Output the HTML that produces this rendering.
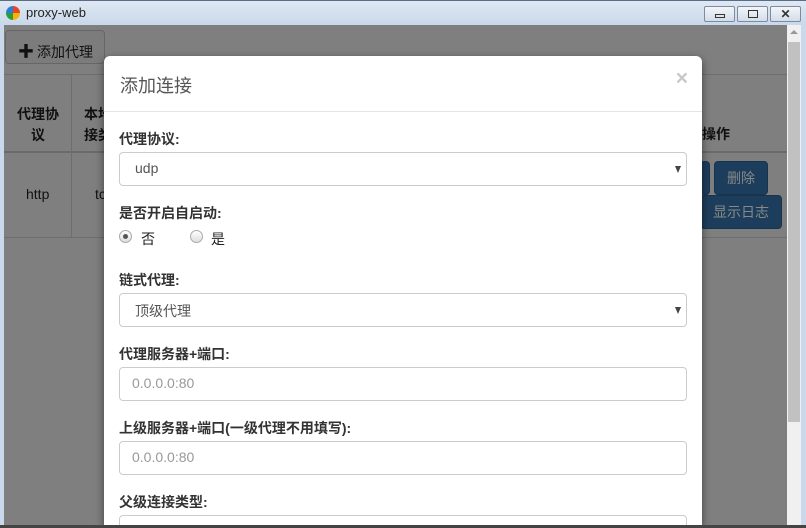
<!DOCTYPE html>
<html style="overflow:hidden;height:528px"><head><meta charset="utf-8"><style>
*{box-sizing:border-box}
html,body{overflow:hidden}
body{margin:0;width:806px;height:528px;font-family:"Liberation Sans","Noto Sans CJK SC",sans-serif;font-size:14px;color:#333;background:#7f7f7f;position:relative}
.tb{position:absolute;left:0;top:0;width:806px;height:25px;background:linear-gradient(#dfe8f3,#c9d8ea);border-top:1px solid #5a6d86}
.tb .t{position:absolute;left:26px;top:4px;font-size:13px;color:#222}
.ic{position:absolute;left:6px;top:5px;width:14px;height:14px;border-radius:50%;background:conic-gradient(#e8442b 0 25%,#f7b500 0 50%,#2c9b3c 0 75%,#2a7fd4 0)}
.wb{position:absolute;top:5px;height:16px;border:1px solid #7d8ba0;border-radius:2px;background:linear-gradient(#f2f5f9,#d4dde8)}
.a{position:absolute}
.frame{position:absolute;left:0;top:25px;width:4px;height:503px;background:#c9d8ea}
.frr{position:absolute;left:801px;top:25px;width:5px;height:503px;background:#c9d8ea}
.bot{position:absolute;left:0;top:525px;width:806px;height:3px;background:#444}
.sb{position:absolute;left:787px;top:25px;width:14px;height:500px;background:#f0f0f0}
.sb .th{position:absolute;left:1px;top:17px;width:12px;height:380px;background:#c1c1c1}
.modal{position:absolute;left:104px;top:56px;width:598px;height:469px;background:#fff;border-radius:6px 6px 0 0;box-shadow:0 3px 9px rgba(0,0,0,.5);overflow:hidden}
.mh{height:56px;border-bottom:1px solid #e5e5e5;position:relative}
.mh .ti{position:absolute;left:16px;top:16px;font-size:18px;color:#555}
.mh .x{position:absolute;right:14px;top:11px;font-size:21px;font-weight:bold;color:#c8c8c8}
.lb{position:absolute;left:15px;font-weight:bold;font-size:14px;color:#333}
.in{position:absolute;left:15px;width:568px;height:34px;border:1px solid #ccc;border-radius:4px;padding:7px 15px;color:#555;font-size:14px}
.ph{color:#999;padding-left:12px}
.arr{position:absolute;right:5px;top:13px;width:0;height:0;border-left:3px solid transparent;border-right:3px solid transparent;border-top:7px solid #444}
.rd{position:absolute;width:13px;height:13px;border-radius:50%;border:1px solid #aaa;background:linear-gradient(#fff,#ddd)}
.btn{position:absolute;background:#1c3e5c;border-radius:4px;color:#888;font-size:14px;text-align:center;border:1px solid #17344e}
</style></head><body>
<div class="tb"><div class="ic"></div><span class="t">proxy-web</span>
<div class="wb" style="left:704px;width:31px"><div class="a" style="left:10px;top:7px;width:10px;height:4px;border:1px solid #333"></div></div>
<div class="wb" style="left:737px;width:31px"><div class="a" style="left:10px;top:3px;width:10px;height:8px;border:1px solid #333"></div></div>
<div class="wb" style="left:770px;width:31px;text-align:center;font-size:12px;font-weight:bold;line-height:14px;color:#333">✕</div>
</div>
<div class="frame"></div><div class="frr"></div>
<div class="a" style="left:5px;top:30px;width:100px;height:34px;border:1px solid #666;border-radius:4px;background:#7c7c7c;padding:7px 0 0 12px;color:#111;white-space:nowrap"><b style="font-size:16px;margin-right:3px">✚</b>添加代理</div>
<div class="a" style="left:4px;top:74px;width:783px;height:1px;background:#6e6e6e"></div>
<div class="a" style="left:4px;top:151px;width:783px;height:2px;background:#6a6a6a"></div>
<div class="a" style="left:4px;top:237px;width:783px;height:1px;background:#6e6e6e"></div>
<div class="a" style="left:71px;top:74px;width:1px;height:163px;background:#6e6e6e"></div>
<div class="a" style="left:16px;top:104px;font-weight:bold;color:#111;line-height:21px;text-align:center;width:44px">代理协<br>议</div>
<div class="a" style="left:84px;top:104px;font-weight:bold;color:#111;line-height:21px">本地<br>接类</div>
<div class="a" style="left:26px;top:186px;color:#111">http</div>
<div class="a" style="left:95px;top:186px;color:#111">tc</div>
<div class="a" style="left:702px;top:124px;font-weight:bold;color:#111">操作</div>
<div class="btn" style="left:700px;top:161px;width:10px;height:34px"></div>
<div class="btn" style="left:714px;top:161px;width:54px;height:34px;line-height:32px">删除</div>
<div class="btn" style="left:700px;top:195px;width:82px;height:34px;line-height:32px">显示日志</div>
<div class="sb"><div class="a" style="left:3px;top:5px;border-left:4px solid transparent;border-right:4px solid transparent;border-bottom:4px solid #999"></div><div class="th"></div></div>
<div class="modal">
<div class="mh"><span class="ti">添加连接</span><span class="x">×</span></div>
<div class="lb" style="top:73px">代理协议:</div>
<div class="in" style="top:96px">udp<div class="arr"></div></div>
<div class="lb" style="top:147px">是否开启自启动:</div>
<div class="rd" style="left:15px;top:174px"><div class="a" style="left:3px;top:3px;width:5px;height:5px;border-radius:50%;background:#555"></div></div>
<div class="a" style="left:37px;top:173px;color:#222">否</div>
<div class="rd" style="left:86px;top:174px"></div>
<div class="a" style="left:107px;top:173px;color:#222">是</div>
<div class="lb" style="top:214px">链式代理:</div>
<div class="in" style="top:237px">顶级代理<div class="arr"></div></div>
<div class="lb" style="top:288px">代理服务器+端口:</div>
<div class="in ph" style="top:311px">0.0.0.0:80</div>
<div class="lb" style="top:362px">上级服务器+端口(一级代理不用填写):</div>
<div class="in ph" style="top:385px">0.0.0.0:80</div>
<div class="lb" style="top:436px">父级连接类型:</div>
<div class="in" style="top:459px"></div>
</div>
<div class="bot"></div>
</body></html>
